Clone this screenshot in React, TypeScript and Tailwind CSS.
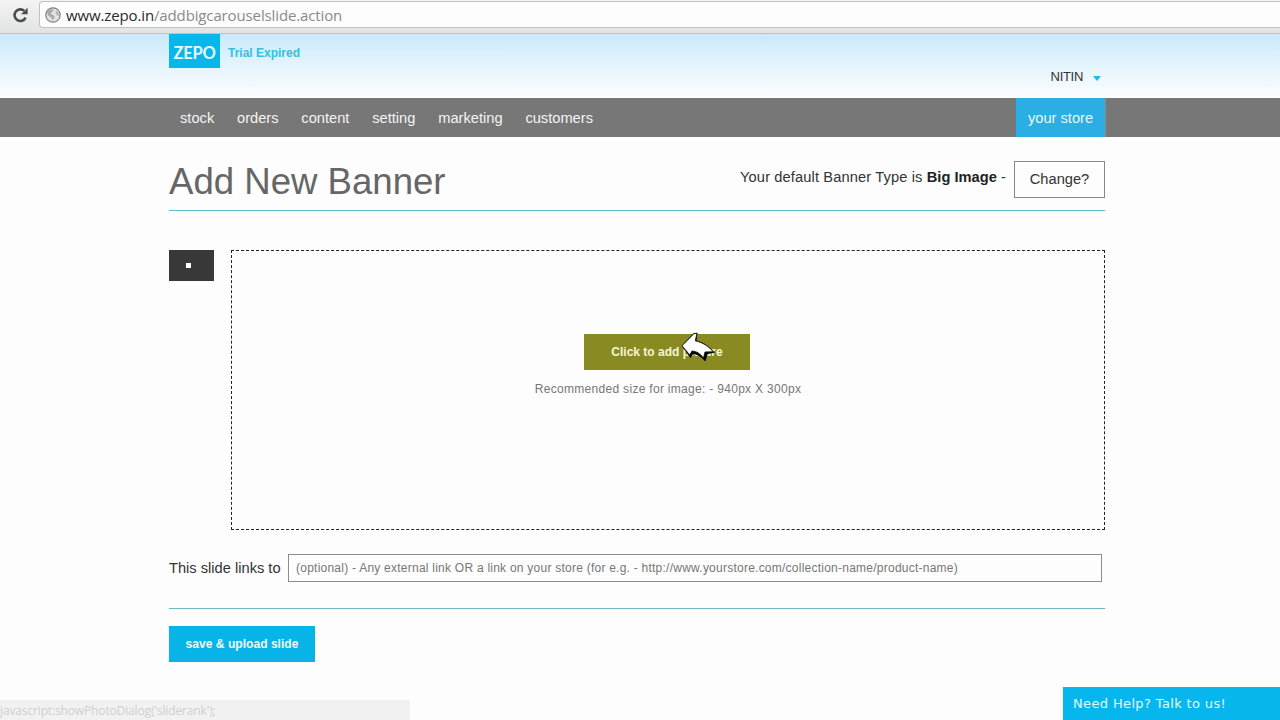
import { useState } from 'react';

const NAV_ITEMS = ['stock', 'orders', 'content', 'setting', 'marketing', 'customers'];

function BrowserBar() {
  return (
    <div className="flex h-[34px] items-start border-b border-[#bdbfc0] bg-linear-to-b from-[#f3f3f3] to-[#e2e3e3]">
      <button className="mt-[7px] ml-3 h-4 w-4" aria-label="Reload">
        <svg viewBox="0 0 16 16" className="h-4 w-4" fill="none">
          <path d="M13.6 10.6A5.8 5.8 0 1 1 12.2 3.8" stroke="#4c4c4c" strokeWidth="2.6" />
          <path d="M15.6 0.8V7.2H9Z" fill="#4c4c4c" />
        </svg>
      </button>
      <div className="mt-px ml-[11px] flex h-[27px] flex-1 items-center rounded-l-sm border border-r-0 border-[#c2c2c2] bg-[#fdfdfd] pl-[5px]">
        <svg viewBox="0 0 16 16" className="h-4 w-4 shrink-0">
          <circle cx="8" cy="8" r="7.2" fill="#e2e2e2" stroke="#808080" strokeWidth="1.2" />
          <path d="M2 5 4.5 2.4 8 2.2 8.4 4 6 5.6 6.4 7.4 9 8.6 9.6 10.2 7.6 13.6 6.4 10.8 3.2 8.4Z" fill="#a9a9a9" />
          <path d="M11 3.4 13.6 6 13.8 9 12 8.4 10.6 6Z" fill="#b4b4b4" />
        </svg>
        <div className="ml-[5px] font-['Open_Sans','Noto_Sans',sans-serif] text-[15px] leading-5 tracking-[-0.13px] whitespace-nowrap text-[#8a8a8a]">
          <span className="text-[#2a2a2a]">www.zepo.in</span>/addbigcarouselslide.action
        </div>
      </div>
    </div>
  );
}

function Header() {
  return (
    <header className="h-16 bg-linear-to-b from-[#c9e9fb] via-[#e5f4fc] via-50% to-[#fbfdfe]">
      <div className="ml-[169px] flex h-full w-[936px] items-start justify-between">
        <div className="flex items-center">
          <div className="flex h-[34px] w-[51px] items-center justify-center bg-[#08b6ec] pt-1 font-['Lato',sans-serif] text-[16.5px] font-bold tracking-[-0.2px] text-[#e6faff]">
            ZEPO
          </div>
          <span className="ml-2 pt-[3px] text-[12px] font-bold text-[#32bfe4]">Trial Expired</span>
        </div>
        <button className="mt-[33px] mr-[4px] flex items-center gap-[10px] text-[13px] leading-5 tracking-[-0.3px] text-[#333]">
          NITIN
          <svg viewBox="0 0 8 5" className="mt-[3px] h-[5px] w-2">
            <path d="M0 0H8L4 5Z" fill="#20bce0" />
          </svg>
        </button>
      </div>
    </header>
  );
}

function Navigation() {
  return (
    <nav className="h-[39px] bg-[#777]">
      <div className="ml-[169px] flex h-full w-[937px] items-center justify-between">
        <div className="flex gap-[22.8px] pl-[11px] text-[14.67px] text-[#f3f3f3]">
          {NAV_ITEMS.map((item) => (
            <a key={item} href="#">
              {item}
            </a>
          ))}
        </div>
        <a
          href="#"
          className="flex h-full w-[90px] items-center justify-center border-r border-[#8a8a8a] bg-[#2aaee4] text-[14.67px] text-[#e9f8ff]"
        >
          your store
        </a>
      </div>
    </nav>
  );
}

export default function App() {
  const [link, setLink] = useState('');

  return (
    <div className="relative h-[720px] w-[1280px] overflow-hidden bg-[#fdfdfd] font-['Liberation_Sans',Arial,sans-serif] text-[#333]">
      <BrowserBar />
      <Header />
      <Navigation />

      <main className="ml-[169px] w-[936px]">
        {/* Title */}
        <div className="flex h-[74px] items-start justify-between border-b border-[#5bbfc9]">
          <h1 className="mt-[22px] text-[36.6px] leading-[46px] whitespace-nowrap text-[#666]">Add New Banner</h1>
          <div className="mt-6 flex items-start">
            <p className="mt-[6px] mr-2 text-[14.67px] leading-5 tracking-[0.12px] whitespace-nowrap">
              Your default Banner Type is <b className="tracking-normal text-[#222]">Big Image</b> -
            </p>
            <button className="h-[37px] w-[91px] border border-[#888] pb-px text-[14.67px]">Change?</button>
          </div>
        </div>

        {/* Slide */}
        <div className="mt-[39px] flex items-start justify-between">
          <div className="flex h-[31px] w-[45px] items-center bg-[#383838] pl-[17px]">
            <span className="h-[5px] w-[5px] bg-white" />
          </div>
          <div className="flex h-[280px] w-[874px] flex-col items-center border border-dashed border-[#222] pt-[83px]">
            <button className="mr-[2px] h-9 w-[166px] bg-[#8a8a22] text-[12px] font-bold text-[#f6f6d2]">
              Click to add picture
            </button>
            <p className="mt-[10px] text-[12px] leading-[18px] tracking-[0.3px] text-[#777]">
              Recommended size for image: - 940px X 300px
            </p>
          </div>
        </div>

        {/* Link */}
        <div className="mt-6 flex h-[55px] items-start border-b border-[#6fb5c1]">
          <label htmlFor="slide-link" className="mt-1 w-[119px] text-[14.67px] leading-5 whitespace-nowrap">
            This slide links to
          </label>
          <input
            id="slide-link"
            value={link}
            onChange={(e) => setLink(e.target.value)}
            placeholder="(optional) - Any external link OR a link on your store (for e.g. - http://www.yourstore.com/collection-name/product-name)"
            className="h-7 w-[814px] border border-[#8c8c8c] px-[7px] text-[12px] tracking-[0.24px] placeholder:text-[#777]"
          />
        </div>

        <button className="mt-[17px] h-9 w-[146px] bg-[#08b3e8] text-[12.1px] font-bold text-[#effbff]">
          save &amp; upload slide
        </button>
      </main>

      {/* Mouse pointer */}
      <svg viewBox="0 0 36 30" className="absolute top-[332px] left-[680px] h-[30px] w-9">
        <path
          d="M1.8 14 13.5 1.3 17.5 0.8 16.5 8.5C24.5 10.5 29.5 15.5 35 20.5L27.5 22 25.5 29.5C21 25 18 22.5 13 22L10.5 26Z"
          fill="#000"
        />
        <path
          d="M2 13.8 14 1.5 17 1.3 15.3 8.8C23.5 10.5 29 15 33.5 19.8L25 20 23.5 26C20 21.5 17 19.5 12 19L9.8 23Z"
          fill="#fff"
          stroke="#111"
          strokeWidth="0.9"
        />
      </svg>

      {/* Browser status text */}
      <div className="absolute bottom-0 left-0 h-5 w-[410px] bg-[#f1f1f1] font-['Open_Sans','Noto_Sans',sans-serif] text-[12px] leading-[21px] tracking-[-0.14px] whitespace-nowrap text-[#cfcfcf]">
        javascript:showPhotoDialog('sliderank');
      </div>

      {/* Support chat */}
      <button className="absolute right-0 bottom-0 h-[33px] w-[217px] bg-[#08b6ee] pl-[10px] text-left font-['DejaVu_Sans',sans-serif] text-[13px] tracking-[0.36px] text-[#e3f9ff]">
        Need Help? Talk to us!
      </button>
    </div>
  );
}
